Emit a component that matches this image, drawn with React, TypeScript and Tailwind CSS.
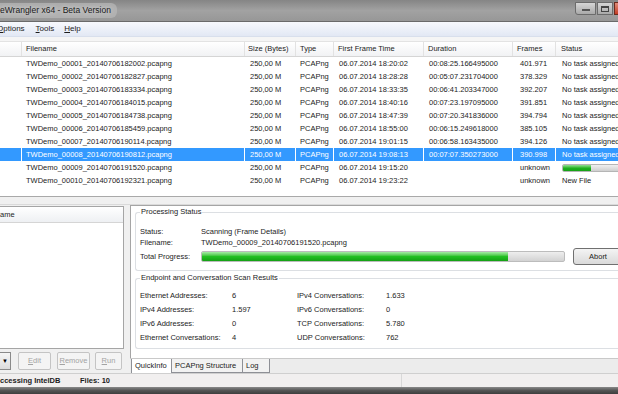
import React from 'react';

interface FileRow {
    name: string;
    time: string;
    duration: string;
    frames: string;
    status: string;
    selected?: boolean;
    progress?: number;
}

const files: FileRow[] = [
    { name: 'TWDemo_00001_20140706182002.pcapng', time: '06.07.2014 18:20:02', duration: '00:08:25.166495000', frames: '401.971', status: 'No task assigned' },
    { name: 'TWDemo_00002_20140706182827.pcapng', time: '06.07.2014 18:28:28', duration: '00:05:07.231704000', frames: '378.329', status: 'No task assigned' },
    { name: 'TWDemo_00003_20140706183334.pcapng', time: '06.07.2014 18:33:35', duration: '00:06:41.203347000', frames: '392.207', status: 'No task assigned' },
    { name: 'TWDemo_00004_20140706184015.pcapng', time: '06.07.2014 18:40:16', duration: '00:07:23.197095000', frames: '391.851', status: 'No task assigned' },
    { name: 'TWDemo_00005_20140706184738.pcapng', time: '06.07.2014 18:47:39', duration: '00:07:20.341836000', frames: '394.794', status: 'No task assigned' },
    { name: 'TWDemo_00006_20140706185459.pcapng', time: '06.07.2014 18:55:00', duration: '00:06:15.249618000', frames: '385.105', status: 'No task assigned' },
    { name: 'TWDemo_00007_20140706190114.pcapng', time: '06.07.2014 19:01:15', duration: '00:06:58.163435000', frames: '394.126', status: 'No task assigned' },
    { name: 'TWDemo_00008_20140706190812.pcapng', time: '06.07.2014 19:08:13', duration: '00:07:07.350273000', frames: '390.998', status: 'No task assigned', selected: true },
    { name: 'TWDemo_00009_20140706191520.pcapng', time: '06.07.2014 19:15:20', duration: '', frames: 'unknown', status: '', progress: 28 },
    { name: 'TWDemo_00010_20140706192321.pcapng', time: '06.07.2014 19:23:22', duration: '', frames: 'unknown', status: 'New File' },
];

const scanLeft = [
    ['Ethernet Addresses:', '6'],
    ['IPv4 Addresses:', '1.597'],
    ['IPv6 Addresses:', '0'],
    ['Ethernet Conversations:', '4'],
];

const scanRight = [
    ['IPv4 Conversations:', '1.633'],
    ['IPv6 Conversations:', '0'],
    ['TCP Conversations:', '5.780'],
    ['UDP Conversations:', '762'],
];

const cols = 'grid grid-cols-[22px_223px_51px_38px_90px_89px_43px_62px]';

function Cell({ sel, className = '', children }: { sel?: boolean; className?: string; children?: React.ReactNode }) {
    return (
        <div className={`flex items-center whitespace-nowrap overflow-hidden border-r border-white ${sel ? 'bg-[#3399ff] text-white' : ''} ${className}`}>
            {children}
        </div>
    );
}

function DisabledButton({ label, width }: { label: React.ReactNode; width: string }) {
    return (
        <div className={`${width} h-[18px] flex items-center justify-center rounded-[2px] border border-[#c4c4c4] bg-[#f4f4f4] text-[#a3a3a3]`}>
            {label}
        </div>
    );
}

export default function App() {
    return (
        <div className="w-[618px] h-[394px] overflow-hidden flex flex-col bg-[#f0f0f0] font-['Liberation_Sans',Arial,sans-serif] text-[7.5px] leading-none text-[#1c1c1c]">
            {/* title bar */}
            <div className="h-[22px] shrink-0 flex items-center bg-gradient-to-b from-[#858585] via-[#a2a2a2] to-[#979797] border-b border-[#6a6a6a]">
                <span className="text-[8.5px] text-[#1a1a1a] bg-[#b9b9b9]/70 rounded-r-[6px] pr-[6px] py-[3px] [text-shadow:0_0_4px_#e0e0e0]">
                    eWrangler x64 - Beta Version
                </span>
                <div className="ml-auto flex items-start h-full pt-[2px] -mr-[26px] gap-[1px]">
                    <div className="w-[21px] h-[13px] rounded-bl-[3px] border border-[#6b6b6b] bg-gradient-to-b from-[#d6d6d6] to-[#a9a9a9] flex items-end justify-center pb-[3px]">
                        <div className="w-[8px] h-[2px] bg-[#f4f4f4] border border-[#555]" />
                    </div>
                    <div className="w-[16px] h-[13px] border border-[#6b6b6b] bg-gradient-to-b from-[#d6d6d6] to-[#a9a9a9] flex items-center justify-center">
                        <div className="w-[8px] h-[6px] border border-[#444] border-t-2" />
                    </div>
                    <div className="w-[30px] h-[13px] border border-[#6b2a1e] bg-gradient-to-b from-[#e08a78] to-[#c43b22]" />
                </div>
            </div>

            {/* menu bar */}
            <div className="h-[15px] shrink-0 flex items-center text-[8px] bg-gradient-to-b from-[#f7f9fd] to-[#e2e8f4] border-b border-[#d8dfec]">
                <span className="-ml-[3px] mr-[11px]"><span className="underline">O</span>ptions</span>
                <span className="mr-[10px]"><span className="underline">T</span>ools</span>
                <span><span className="underline">H</span>elp</span>
            </div>

            <div className="h-[4px] shrink-0 bg-[#f5f5f5]" />

            {/* file list */}
            <div className="h-[156px] shrink-0 bg-white border-b border-[#a9a9a9]">
                <div className={`${cols} h-[16px] bg-gradient-to-b from-white to-[#f1f2f4] border-b border-[#d5d5d5] border-t border-t-[#e3e3e3]`}>
                    <div className="border-r border-[#e2e2e2]" />
                    <div className="flex items-center pl-[4px] border-r border-[#e2e2e2]">Filename</div>
                    <div className="flex items-center pl-[3px] border-r border-[#e2e2e2] whitespace-nowrap">Size (Bytes)</div>
                    <div className="flex items-center pl-[4px] border-r border-[#e2e2e2]">Type</div>
                    <div className="flex items-center pl-[4px] border-r border-[#e2e2e2]">First Frame Time</div>
                    <div className="flex items-center pl-[4px] border-r border-[#e2e2e2]">Duration</div>
                    <div className="flex items-center pl-[4px] border-r border-[#e2e2e2]">Frames</div>
                    <div className="flex items-center pl-[5px]">Status</div>
                </div>
                {files.map((f) => (
                    <div key={f.name} className={`${cols} h-[13px]`}>
                        <Cell sel={f.selected} />
                        <Cell sel={f.selected} className="pl-[4px]">{f.name}</Cell>
                        <Cell sel={f.selected} className="pl-[5px]">250,00 M</Cell>
                        <Cell sel={f.selected} className="pl-[4px]">PCAPng</Cell>
                        <Cell sel={f.selected} className="pl-[5px]">{f.time}</Cell>
                        <Cell sel={f.selected} className="pl-[5px]">{f.duration}</Cell>
                        <Cell sel={f.selected} className="pl-[7px]">{f.frames}</Cell>
                        <Cell sel={f.selected} className="pl-[6px] border-r-0">
                            {f.progress !== undefined ? (
                                <div className="w-[70px] h-[8px] shrink-0 rounded-[2px] border border-[#b5b5b5] bg-gradient-to-b from-[#f0f0f0] to-[#cfcfcf] overflow-hidden">
                                    <div
                                        className="h-full bg-gradient-to-b from-[#8fe08f] via-[#1fb31f] to-[#16a016]"
                                        style={{ width: `${f.progress}px` }}
                                    />
                                </div>
                            ) : (
                                f.status
                            )}
                        </Cell>
                    </div>
                ))}
            </div>

            {/* splitter */}
            <div className="h-[8px] shrink-0 bg-[#f0f0f0] border-b border-[#dadada]" />

            {/* lower area */}
            <div className="h-[168px] shrink-0 flex gap-[6px]">
                <div className="w-[124px] shrink-0 flex flex-col">
                    <div className="h-[143px] mt-[1px] bg-white border-y border-r border-[#a5a5a5]">
                        <div className="h-[16px] flex items-center bg-gradient-to-b from-white to-[#eef0f3] border-b border-[#d5d5d5]">ame</div>
                    </div>
                    <div className="flex items-center h-[24px]">
                        <div className="w-[11px] h-[18px] flex items-center justify-center border border-l-0 border-[#8a8a8a] bg-gradient-to-b from-[#f6f6f6] to-[#dcdcdc] text-[6px] text-black">▼</div>
                        <div className="ml-[7px]"><DisabledButton width="w-[33px]" label={<span><span className="underline">E</span>dit</span>} /></div>
                        <div className="ml-[6px]"><DisabledButton width="w-[33px]" label={<span><span className="underline">R</span>emove</span>} /></div>
                        <div className="ml-[5px]"><DisabledButton width="w-[27px]" label={<span><span className="underline">R</span>un</span>} /></div>
                    </div>
                </div>

                <div className="flex-1 flex flex-col min-w-0">
                    <div className="h-[153px] bg-white border-l border-t border-[#a5a5a5] overflow-hidden">
                        <fieldset className="ml-[4px] mt-[1px] w-[520px] h-[64px] border border-r-0 border-[#dcdfe3] rounded-[3px] pl-[4px]">
                            <legend className="h-[10px] leading-[10px] px-[1px]">Processing Status</legend>
                            <div className="grid grid-cols-[61px_1fr] mt-[9px]">
                                <div className="h-[11px] flex items-center">Status:</div>
                                <div className="h-[11px] flex items-center">Scanning (Frame Details)</div>
                                <div className="h-[11px] flex items-center">Filename:</div>
                                <div className="h-[11px] flex items-center">TWDemo_00009_20140706191520.pcapng</div>
                                <div className="h-[17px] flex items-center">Total Progress:</div>
                                <div className="h-[17px] flex items-center">
                                    <div className="w-[364px] h-[11px] rounded-[2px] border border-[#bcbcbc] bg-gradient-to-b from-[#eeeeee] to-[#d2d2d2] overflow-hidden">
                                        <div className="h-full w-[306px] bg-gradient-to-b from-[#a4eca4] via-[#22c022] to-[#14a014]" />
                                    </div>
                                    <div className="ml-[8px] w-[50px] h-[17px] flex items-center justify-center rounded-[3px] border border-[#707070] bg-gradient-to-b from-[#f4f4f4] to-[#dadada] text-[7.5px]">
                                        Abort
                                    </div>
                                </div>
                            </div>
                        </fieldset>
                        <fieldset className="ml-[4px] mt-[2px] w-[520px] h-[76px] border border-r-0 border-[#dcdfe3] rounded-[3px] pl-[4px]">
                            <legend className="h-[10px] leading-[10px] px-[1px]">Endpoint and Conversation Scan Results</legend>
                            <div className="grid grid-cols-[92px_65px_89px_1fr] mt-[6px]">
                                {scanLeft.map(([label, value], i) => (
                                    <React.Fragment key={label}>
                                        <div className="h-[14px] flex items-center">{label}</div>
                                        <div className="h-[14px] flex items-center">{value}</div>
                                        <div className="h-[14px] flex items-center">{scanRight[i][0]}</div>
                                        <div className="h-[14px] flex items-center">{scanRight[i][1]}</div>
                                    </React.Fragment>
                                ))}
                            </div>
                        </fieldset>
                    </div>
                    <div className="h-[15px] flex border-t border-[#c9c9c9] bg-[#ececec]">
                        <div className="ml-[1px] w-[41px] h-[15px] flex items-center pl-[3px] bg-white border-x border-b border-[#8e9096]">QuickInfo</div>
                        <div className="w-[71px] h-[14px] flex items-center pl-[3px] bg-[#f2f2f2] border-r border-b border-[#8e9096]">PCAPng Structure</div>
                        <div className="w-[27px] h-[14px] flex items-center pl-[3px] bg-[#f2f2f2] border-r border-b border-[#8e9096]">Log</div>
                    </div>
                </div>
            </div>

            {/* status bar */}
            <div className="h-[14px] shrink-0 flex items-center font-bold bg-[#f1efef] border-t border-[#cfcfcf]">
                <span className="w-[80px]">ccessing IntelDB</span>
                <span className="w-[322px] h-full flex items-center border-r border-[#d8d8d8]">Files: 10</span>
            </div>

            {/* bottom edge */}
            <div className="flex-1 bg-gradient-to-b from-[#8a8a8a] via-[#555555] to-[#3e3e3e]" />
        </div>
    );
}
